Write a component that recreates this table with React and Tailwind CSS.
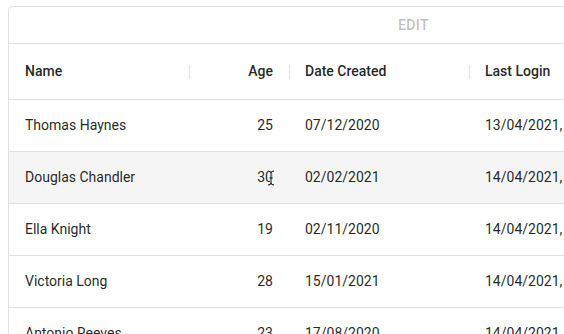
const columns = [
  { key: 'name', label: 'Name', width: 'w-[180px]', align: 'text-left' },
  { key: 'age', label: 'Age', width: 'w-[100px]', align: 'text-right' },
  { key: 'created', label: 'Date Created', width: 'w-[180px]', align: 'text-left' },
  { key: 'login', label: 'Last Login', width: 'w-[200px]', align: 'text-left' },
];

const rows = [
  { id: 1, name: 'Thomas Haynes', age: 25, created: '07/12/2020', login: '13/04/2021, 10:12:44' },
  { id: 2, name: 'Douglas Chandler', age: 30, created: '02/02/2021', login: '14/04/2021, 08:31:05' },
  { id: 3, name: 'Ella Knight', age: 19, created: '02/11/2020', login: '14/04/2021, 11:47:20' },
  { id: 4, name: 'Victoria Long', age: 28, created: '15/01/2021', login: '14/04/2021, 09:02:13' },
  { id: 5, name: 'Antonio Reeves', age: 23, created: '17/08/2020', login: '14/04/2021, 07:55:38' },
];

// text cursor drawn over the hovered age cell
const IBeam = () => (
  <svg className="absolute right-[-2px] top-[3px]" width="8" height="16" viewBox="0 0 8 16">
    <path d="M1 1 Q4 1 4 3 L4 13 Q4 15 1 15 M7 1 Q4 1 4 3 M7 15 Q4 15 4 13" fill="none" stroke="#fff" strokeWidth="2.4" />
    <path d="M1 1 Q4 1 4 3 L4 13 Q4 15 1 15 M7 1 Q4 1 4 3 M7 15 Q4 15 4 13 M2.5 8 L5.5 8" fill="none" stroke="#000" strokeWidth="1" />
  </svg>
);

const App = () => {
  return (
    <div className="w-[564px] h-[334px] overflow-hidden bg-white font-['Roboto',sans-serif] text-[14px] text-[rgba(0,0,0,0.87)]">
      <div className="ml-[8px] mt-[6px] w-[720px] border border-[#e0e0e0] rounded-tl-[4px]">
        {/* Toolbar */}
        <div className="h-[37px] flex items-center border-b border-[#e0e0e0]">
          <button className="ml-[381px] px-2 py-[6px] text-[14px] font-medium uppercase tracking-[0.4px] text-[rgba(0,0,0,0.26)] leading-[24px]">
            Edit
          </button>
        </div>

        {/* Header */}
        <div className="flex h-[56px] border-b border-[#e0e0e0]">
          {columns.map((col, i) => (
            <div key={col.key} className={`relative ${col.width} px-4 flex items-center ${col.align === 'text-right' ? 'justify-end' : ''} font-medium`}>
              <span>{col.label}</span>
              {i < columns.length - 1 && (
                <span className="absolute right-[-1px] top-[21px] h-[14px] w-px bg-[#e0e0e0]" />
              )}
            </div>
          ))}
        </div>

        {/* Rows */}
        {rows.map(row => (
          <div key={row.id} className={`flex h-[52px] border-b border-[#e0e0e0] ${row.id === 2 ? 'bg-[#f5f5f5]' : ''}`}>
            <div className="w-[180px] px-4 flex items-center whitespace-nowrap">{row.name}</div>
            <div className="w-[100px] px-4 flex items-center justify-end">
              <span className="relative">
                {row.age}
                {row.id === 2 && <IBeam />}
              </span>
            </div>
            <div className="w-[180px] px-4 flex items-center">{row.created}</div>
            <div className="w-[200px] px-4 flex items-center whitespace-nowrap">{row.login}</div>
          </div>
        ))}
      </div>
    </div>
  );
};

export default App;
